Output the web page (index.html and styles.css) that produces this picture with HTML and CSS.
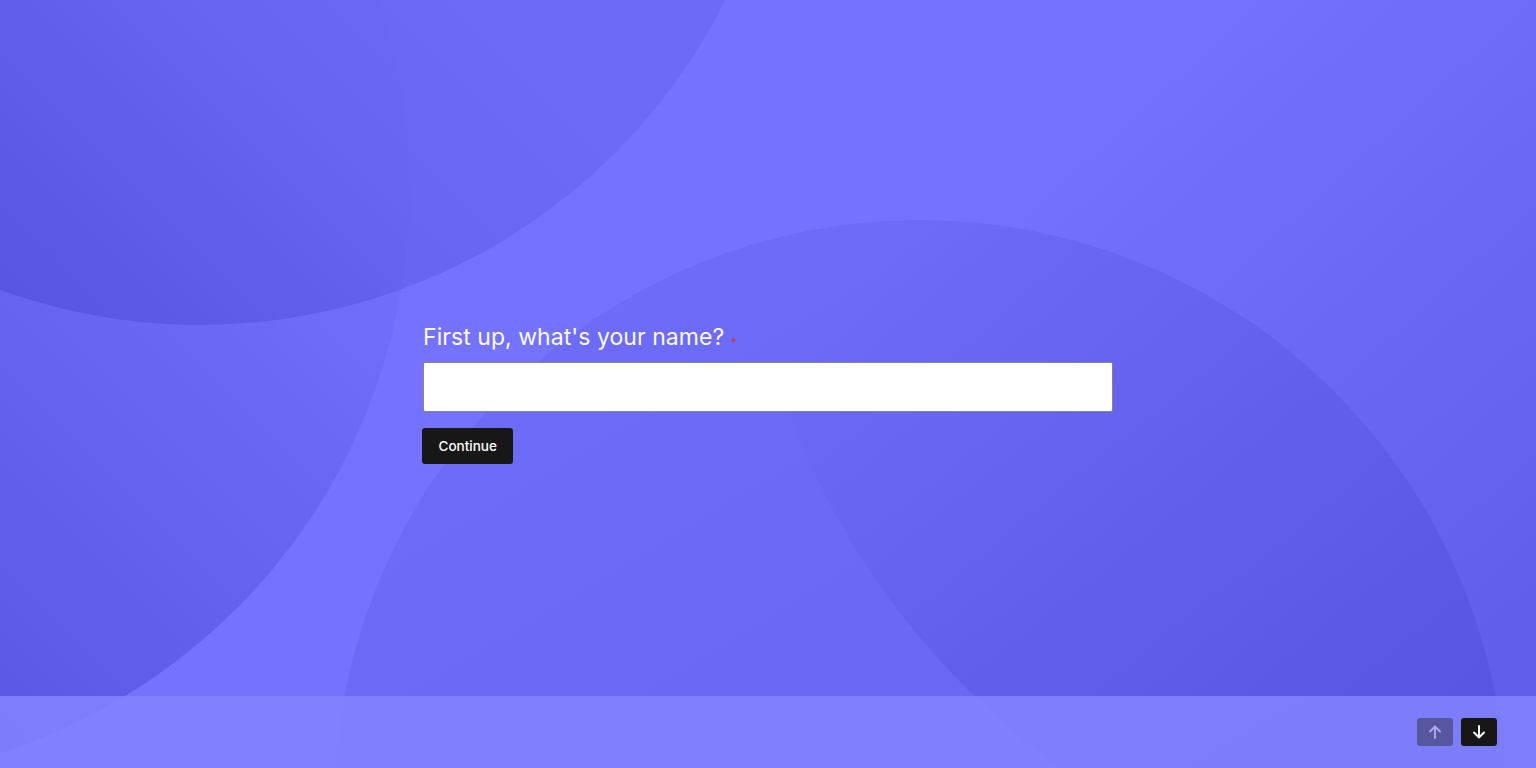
FILE: index.html
```html
<!DOCTYPE html>
<html lang="en">
<head>
<meta charset="utf-8">
<title>Form</title>
<link rel="stylesheet" href="styles.css">
</head>
<body>
<div class="page">
  <svg class="backdrop" viewBox="0 0 1536 768" preserveAspectRatio="none" aria-hidden="true">
    <defs>
      <linearGradient id="g1" x1="1" y1="0" x2="0" y2="1">
        <stop offset="0.5" stop-color="rgb(62,58,200)" stop-opacity="0.15"/>
        <stop offset="0.85" stop-color="rgb(62,58,200)" stop-opacity="0.36"/>
      </linearGradient>
      <linearGradient id="g2" x1="1" y1="0" x2="0" y2="1">
        <stop offset="0.25" stop-color="rgb(62,58,200)" stop-opacity="0.02"/>
        <stop offset="0.68" stop-color="rgb(62,58,200)" stop-opacity="0.5"/>
      </linearGradient>
      <linearGradient id="g3" x1="0.3" y1="0" x2="0.9" y2="1">
        <stop offset="0" stop-color="rgb(62,58,200)" stop-opacity="0.12"/>
        <stop offset="1" stop-color="rgb(62,58,200)" stop-opacity="0.3"/>
      </linearGradient>
      <linearGradient id="g4" gradientUnits="userSpaceOnUse" x1="900" y1="250" x2="1400" y2="800">
        <stop offset="0" stop-color="rgb(62,58,200)" stop-opacity="0"/>
        <stop offset="1" stop-color="rgb(62,58,200)" stop-opacity="0.38"/>
      </linearGradient>
    </defs>
    <rect x="0" y="0" width="1536" height="768" fill="#7572ff"/>
    <circle cx="1500" cy="150" r="758" fill="url(#g4)"/>
    <circle cx="200" cy="-262" r="587" fill="url(#g1)"/>
    <circle cx="-182" cy="190" r="592" fill="url(#g2)"/>
    <circle cx="920" cy="806" r="586" fill="url(#g3)"/>
  </svg>

  <main class="main">
    <form class="question">
      <label class="question-label" for="name">First up, what's your name?<span class="required">*</span></label>
      <input class="text-input" id="name" type="text" autocomplete="off">
      <button class="continue-btn" type="button">Continue</button>
    </form>
  </main>

  <footer class="footer">
    <div class="nav">
      <button class="nav-btn nav-btn--prev" type="button" aria-label="Previous">
        <svg viewBox="0 0 16 16" width="16" height="16"><path d="M8 14V2.5M3 7.5l5-5 5 5" fill="none" stroke="currentColor" stroke-width="1.9" stroke-linecap="round" stroke-linejoin="round"/></svg>
      </button>
      <button class="nav-btn nav-btn--next" type="button" aria-label="Next">
        <svg viewBox="0 0 16 16" width="16" height="16"><path d="M8 2v11.5M3 8.5l5 5 5-5" fill="none" stroke="currentColor" stroke-width="1.9" stroke-linecap="round" stroke-linejoin="round"/></svg>
      </button>
    </div>
  </footer>
</div>
</body>
</html>
```

FILE: styles.css
```css
* {
  box-sizing: border-box;
}

html, body {
  margin: 0;
  padding: 0;
  height: 100%;
}

body {
  font-family: Inter, "Noto Sans", "Liberation Sans", sans-serif;
  overflow: hidden;
}

.page {
  position: relative;
  height: 100vh;
  display: flex;
  flex-direction: column;
  background: #7572ff;
}

.backdrop {
  position: absolute;
  inset: 0;
  width: 100%;
  height: 100%;
  z-index: 0;
}

.main {
  position: relative;
  z-index: 1;
  flex: 1;
  display: flex;
  justify-content: center;
  align-items: flex-start;
  padding-top: 322px;
}

.question {
  width: 690px;
  display: flex;
  flex-direction: column;
  align-items: flex-start;
}

.question-label {
  display: block;
  color: #fafaff;
  font-size: 23px;
  font-weight: 400;
  line-height: 30px;
  height: 30px;
  letter-spacing: 0.05px;
  margin-bottom: 10px;
}

.required {
  color: #d0303a;
  font-size: 11px;
  line-height: 0;
  margin-left: 7px;
  vertical-align: -1px;
}

.text-input {
  width: 690px;
  height: 50px;
  background: #ffffff;
  border: 1px solid #858585;
  border-radius: 2px;
  padding: 0 12px;
  font-size: 18px;
  font-family: inherit;
  outline: none;
}

.continue-btn {
  margin-top: 16px;
  margin-left: -1px;
  height: 36px;
  padding: 0 16.5px;
  background: #171717;
  color: #ffffff;
  border: 0;
  border-radius: 3px;
  font-family: inherit;
  font-size: 13.5px;
  font-weight: 500;
  cursor: pointer;
}

.footer {
  position: relative;
  z-index: 1;
  height: 72px;
  background: rgba(132, 132, 255, 0.85);
  display: flex;
  align-items: center;
  justify-content: flex-end;
  padding-right: 39px;
}

.nav {
  display: flex;
  gap: 8px;
}

.nav-btn {
  width: 36px;
  height: 28px;
  border: 0;
  border-radius: 3px;
  display: flex;
  align-items: center;
  justify-content: center;
  padding: 0;
  cursor: pointer;
}

.nav-btn--prev {
  background: #57579f;
  color: #aaaaf2;
}

.nav-btn--next {
  background: #171717;
  color: #ffffff;
}
```
